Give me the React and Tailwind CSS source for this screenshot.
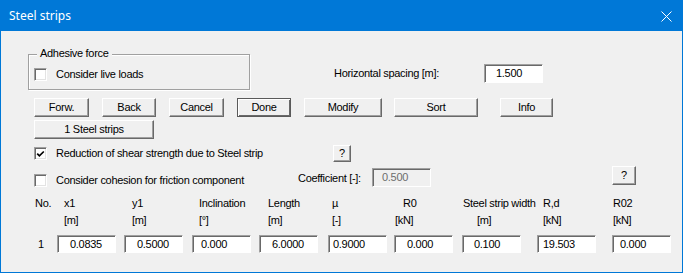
import React from "react";

const F = "font-['Liberation_Sans',Arial,sans-serif] text-[11px] tracking-[-0.3px] text-black";

function Btn({ className = "", children, def = false }) {
  return (
    <div
      className={
        "flex items-center justify-center bg-[#f0f0f0] border leading-none " +
        (def
          ? "border-[#5a5a5a] shadow-[inset_1px_1px_0_#ffffff,inset_-1px_-1px_0_#696969] "
          : "border-t-white border-l-white border-b-[#696969] border-r-[#696969] shadow-[inset_-1px_-1px_0_#a0a0a0] ") +
        className
      }
    >
      {children}
    </div>
  );
}

function Input({ className = "", children, disabled = false }) {
  return (
    <div
      className={
        "flex items-center border border-t-[#a0a0a0] border-l-[#a0a0a0] border-b-white border-r-white shadow-[inset_1px_1px_0_#696969] leading-none " +
        (disabled ? "bg-[#f0f0f0] text-[#6d6d6d] " : "bg-white ") +
        className
      }
    >
      {children}
    </div>
  );
}

function Check({ checked = false }) {
  return (
    <span className="w-[13px] h-[13px] shrink-0 bg-white border border-t-[#a0a0a0] border-l-[#a0a0a0] border-b-white border-r-white shadow-[inset_1px_1px_0_#696969,inset_-1px_-1px_0_#e3e3e3] flex items-center justify-center">
      {checked && (
        <svg width="9" height="8" viewBox="0 0 9 8">
          <polyline points="1.2,3.6 3.4,5.9 7.8,1.5" fill="none" stroke="#000" strokeWidth="1.7" />
        </svg>
      )}
    </span>
  );
}

const cols = [
  { label: "x1", lp: "pl-[7px]", unit: "[m]", up: "pl-[7px]", val: "0.0835", vp: "pl-[12px]" },
  { label: "y1", lp: "pl-[8px]", unit: "[m]", up: "pl-[8px]", val: "0.5000", vp: "pl-[12px]" },
  { label: "Inclination", lp: "pl-[7px]", unit: "[°]", up: "pl-[7px]", val: "0.000", vp: "pl-[8px]" },
  { label: "Length", lp: "pl-[9px]", unit: "[m]", up: "pl-[9px]", val: "6.0000", vp: "pl-[12px]" },
  { label: "µ", lp: "pl-[4px]", unit: "[-]", up: "pl-[4px]", val: "0.9000", vp: "pl-[4px]" },
  { label: "R0", lp: "pl-[9px]", unit: "[kN]", up: "pl-[1px]", val: "0.000", vp: "pl-[12px]" },
  { label: "Steel strip width", lp: "pl-[1px]", unit: "[m]", up: "pl-[15px]", val: "0.100", vp: "pl-[11px]" },
  { label: "R,d", lp: "pl-[6px]", unit: "[kN]", up: "pl-[6px]", val: "19.503", vp: "pl-[5px]" },
  { label: "R02", lp: "pl-[1px]", unit: "[kN]", up: "pl-[1px]", val: "0.000", vp: "pl-[7px]" },
];

export default function App() {
  return (
    <div className={"w-[683px] h-[273px] border border-[#0078d7] bg-[#f0f0f0] flex flex-col overflow-hidden " + F}>
      <div className="h-[30px] shrink-0 bg-[#0078d7] flex items-center">
        <span className="pl-[8px] text-white text-[12px] tracking-normal font-['Noto_Sans',sans-serif]">Steel strips</span>
        <svg className="ml-auto mr-[10px]" width="11" height="11" viewBox="0 0 11 11">
          <path d="M0.5 0.5 L10.5 10.5 M10.5 0.5 L0.5 10.5" stroke="#fff" strokeWidth="1" fill="none" />
        </svg>
      </div>

      {/* Row A */}
      <div className="flex items-start">
        <div className="relative ml-[27px] mt-[23px] w-[222px] h-[36px] border border-[#a0a0a0] shadow-[1px_1px_0_#fff,inset_1px_1px_0_#fff]">
          <span className="absolute left-[8px] -top-[8px] px-[3px] bg-[#f0f0f0] leading-[13px]">Adhesive force</span>
          <div className="pt-[13px] pl-[5px] flex items-center">
            <Check />
            <span className="ml-[9px] leading-[13px]">Consider live loads</span>
          </div>
        </div>
        <div className="flex items-center mt-[33px] h-[19px]">
          <span className="ml-[84px] w-[150px]">Horizontal spacing [m]:</span>
          <Input className="w-[59px] h-[19px] pl-[11px]">1.500</Input>
        </div>
      </div>

      {/* Row B */}
      <div className="flex mt-[8px] ml-[33px] h-[19px]">
        <Btn className="w-[55px]">Forw.</Btn>
        <Btn className="ml-[13px] w-[54px]">Back</Btn>
        <Btn className="ml-[13px] w-[55px]">Cancel</Btn>
        <Btn def className="ml-[13px] w-[54px]">Done</Btn>
        <Btn className="ml-[13px] w-[78px]">Modify</Btn>
        <Btn className="ml-[12px] w-[84px]">Sort</Btn>
        <Btn className="ml-[22px] w-[53px]">Info</Btn>
      </div>

      {/* Row C */}
      <div className="flex mt-[3px] ml-[33px]">
        <Btn className="w-[120px] h-[19px]">1 Steel strips</Btn>
      </div>

      {/* Row D */}
      <div className="flex items-center mt-[6px] h-[17px]">
        <div className="ml-[33px] w-[299px] flex items-center">
          <Check checked />
          <span className="ml-[9px]">Reduction of shear strength due to Steel strip</span>
        </div>
        <Btn className="w-[18px] h-[17px]">?</Btn>
      </div>

      {/* Row E */}
      <div className="flex items-start mt-[4px] h-[21px]">
        <div className="ml-[33px] w-[264px] mt-[6px] flex items-center">
          <Check />
          <span className="ml-[9px]">Consider cohesion for friction component</span>
        </div>
        <span className="w-[74px] mt-[6px] leading-[13px]">Coefficient [-]:</span>
        <Input disabled className="mt-[2px] w-[59px] h-[19px] pl-[9px]">0.500</Input>
        <Btn className="ml-[181px] w-[24px] h-[19px]">?</Btn>
      </div>

      {/* Table */}
      <div className="mt-[8px] grid grid-cols-[56px_67px_68px_67px_69px_66px_68px_75px_75px_59px]">
        <div className="pl-[34px] leading-[17px]">No.</div>
        {cols.map((c) => (
          <div key={c.label + "l"} className={"leading-[17px] whitespace-nowrap " + c.lp}>{c.label}</div>
        ))}
        <div className="leading-[17px]"></div>
        {cols.map((c, i) => (
          <div key={c.label + "u" + i} className={"leading-[17px] " + c.up}>{c.unit}</div>
        ))}
        <div className="mt-[6px] h-[18px] pl-[37px] flex items-center">1</div>
        {cols.map((c, i) => (
          <div key={c.label + "v" + i} className="mt-[6px]">
            <Input className={"w-[59px] h-[18px] " + c.vp}>{c.val}</Input>
          </div>
        ))}
      </div>
    </div>
  );
}
